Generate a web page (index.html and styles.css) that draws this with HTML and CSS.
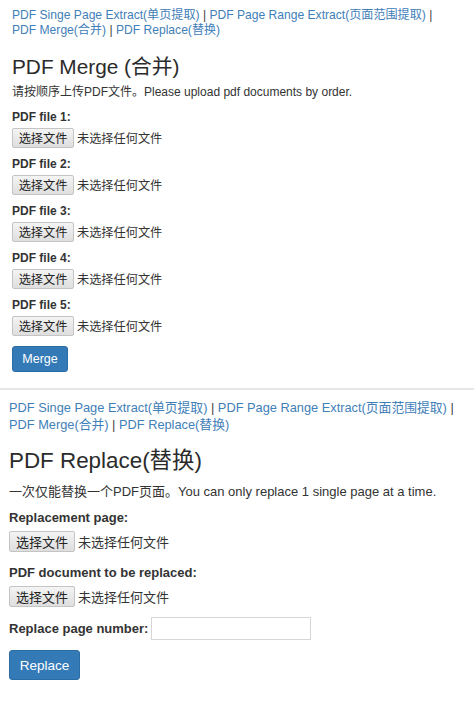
FILE: index.html
```html
<!DOCTYPE html>
<html lang="zh">
<head>
<meta charset="utf-8">
<title>PDF Tools</title>
<link rel="stylesheet" href="styles.css">
</head>
<body>
<section class="panel panel-merge">
  <nav class="nav">
    <div class="nav-line"><a href="#">PDF Singe Page Extract(单页提取)</a> | <a href="#">PDF Page Range Extract(页面范围提取)</a> |</div>
    <div class="nav-line"><a href="#">PDF Merge(合并)</a> | <a href="#">PDF Replace(替换)</a></div>
  </nav>
  <h1 class="title">PDF Merge (合并)</h1>
  <p class="desc">请按顺序上传PDF文件。Please upload pdf documents by order.</p>
  <div class="fields">
    <div class="field"><div class="label">PDF file 1:</div><div class="file"><span class="file-btn">选择文件</span><span class="file-none">未选择任何文件</span></div></div>
    <div class="field"><div class="label">PDF file 2:</div><div class="file"><span class="file-btn">选择文件</span><span class="file-none">未选择任何文件</span></div></div>
    <div class="field"><div class="label">PDF file 3:</div><div class="file"><span class="file-btn">选择文件</span><span class="file-none">未选择任何文件</span></div></div>
    <div class="field"><div class="label">PDF file 4:</div><div class="file"><span class="file-btn">选择文件</span><span class="file-none">未选择任何文件</span></div></div>
    <div class="field"><div class="label">PDF file 5:</div><div class="file"><span class="file-btn">选择文件</span><span class="file-none">未选择任何文件</span></div></div>
  </div>
  <button class="btn btn-merge" type="button">Merge</button>
</section>
<div class="divider"></div>
<section class="panel panel-replace">
  <nav class="nav">
    <div class="nav-line"><a href="#">PDF Singe Page Extract(单页提取)</a> | <a href="#">PDF Page Range Extract(页面范围提取)</a> |</div>
    <div class="nav-line"><a href="#">PDF Merge(合并)</a> | <a href="#">PDF Replace(替换)</a></div>
  </nav>
  <h1 class="title">PDF Replace(替换)</h1>
  <p class="desc">一次仅能替换一个PDF页面。You can only replace 1 single page at a time.</p>
  <div class="label">Replacement page:</div>
  <div class="file"><span class="file-btn">选择文件</span><span class="file-none">未选择任何文件</span></div>
  <div class="label label-2">PDF document to be replaced:</div>
  <div class="file"><span class="file-btn">选择文件</span><span class="file-none">未选择任何文件</span></div>
  <div class="number-row"><span class="label">Replace page number:</span><input class="number-input" type="text"></div>
  <button class="btn btn-replace" type="button">Replace</button>
</section>
</body>
</html>
```
FILE: styles.css
```css
html, body {
  margin: 0;
  padding: 0;
  background: #ffffff;
}
body {
  font-family: "Liberation Sans", Arial, "Noto Sans CJK SC", sans-serif;
  color: #333333;
  width: 474px;
  height: 711px;
  overflow: hidden;
}
.nav a {
  color: #3f80b8;
  text-decoration: none;
}
.nav {
  color: #444;
}
.nav-line {
  white-space: nowrap;
}
.title {
  font-weight: normal;
  margin: 0;
  color: #2b2b2b;
}
.desc {
  margin: 0;
}
.label {
  font-weight: bold;
  color: #333;
}
.file {
  display: flex;
  align-items: center;
}
.file-btn {
  box-sizing: border-box;
  display: inline-flex;
  align-items: center;
  justify-content: center;
  background: linear-gradient(#f4f4f4, #dedede);
  border: 1px solid #c4c4c4;
  border-radius: 2px;
  color: #222;
  font-family: "Noto Sans CJK SC", sans-serif;
}
.file-none {
  color: #333;
  font-family: "Noto Sans CJK SC", sans-serif;
  margin-left: 3px;
}
.btn {
  display: block;
  box-sizing: border-box;
  background: #337ab7;
  border: 1px solid #2e6da4;
  border-radius: 3px;
  color: #ffffff;
  font-family: "Liberation Sans", Arial, sans-serif;
  padding: 0;
}

/* top panel */
.panel-merge {
  padding: 8px 12px 0;
}
.panel-merge .nav {
  font-size: 12.1px;
  line-height: 15px;
}
.panel-merge .title {
  font-size: 20.8px;
  line-height: 26px;
  margin-top: 16px;
}
.panel-merge .desc {
  font-size: 12px;
  line-height: 16px;
  margin-top: 4px;
}
.panel-merge .fields {
  margin-top: 9px;
  display: flex;
  flex-direction: column;
  gap: 8px;
}
.panel-merge .label {
  font-size: 12px;
  line-height: 16px;
}
.panel-merge .file {
  margin-top: 3px;
  height: 20px;
}
.panel-merge .file-btn {
  width: 62px;
  height: 20px;
  font-size: 12.2px;
}
.panel-merge .file-none {
  font-size: 12.2px;
}
.btn-merge {
  margin-top: 10px;
  width: 56px;
  height: 26px;
  font-size: 12.5px;
}

.divider {
  margin-top: 16px;
  height: 2px;
  background: #e6e6e6;
}

/* bottom panel */
.panel-replace {
  padding: 9px 9px 0;
}
.panel-replace .nav {
  font-size: 12.8px;
  line-height: 17px;
}
.panel-replace .title {
  font-size: 22.4px;
  line-height: 30px;
  margin-top: 13px;
}
.panel-replace .desc {
  font-size: 13px;
  line-height: 17px;
  margin-top: 7px;
}
.panel-replace .label {
  font-size: 13px;
  line-height: 17px;
  margin-top: 9px;
}
.panel-replace .label-2 {
  margin-top: 12px;
}
.panel-replace .file {
  margin-top: 5px;
  height: 21px;
}
.panel-replace .file-btn {
  width: 66px;
  height: 21px;
  font-size: 13px;
}
.panel-replace .file-none {
  font-size: 13px;
}
.number-row {
  display: flex;
  align-items: center;
  margin-top: 10px;
  height: 22px;
}
.number-row .label {
  margin-top: 0;
}
.number-input {
  box-sizing: border-box;
  width: 160px;
  height: 23px;
  margin: 0 0 0 3px;
  border: 1px solid #d6d6d6;
  background: #fff;
  padding: 0;
}
.btn-replace {
  margin-top: 11px;
  width: 71px;
  height: 30px;
  font-size: 13.5px;
}
```
